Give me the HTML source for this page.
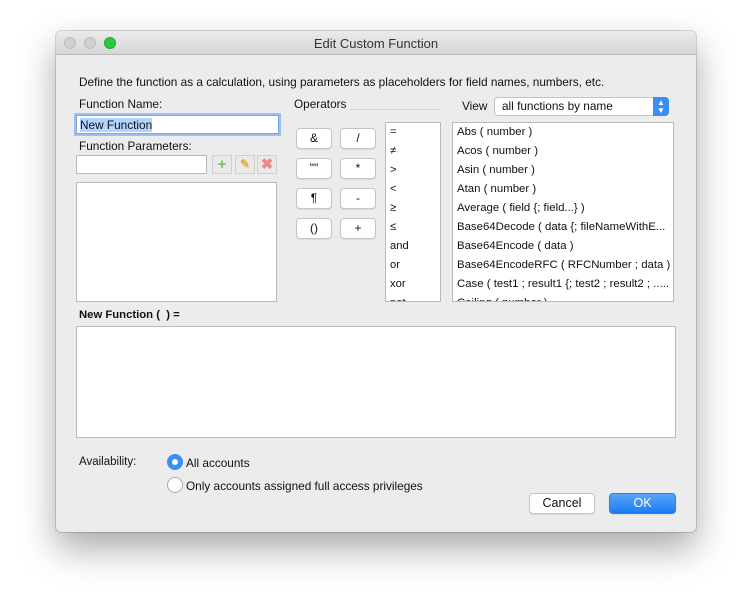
<!DOCTYPE html>
<html><head><style>
*{box-sizing:border-box;margin:0;padding:0}
body{width:752px;height:613px;background:#fff;font-family:"Liberation Sans",sans-serif;font-size:11.8px;color:#111;position:relative;overflow:hidden}
.win{position:absolute;left:56px;top:31px;width:640px;height:501px;background:#ececec;border-radius:5px;box-shadow:0 16px 36px rgba(0,0,0,.35),0 0 0 1px rgba(0,0,0,.15)}
.tb{position:absolute;left:0;top:0;width:640px;height:24px;background:linear-gradient(#ebebeb,#d6d6d6);border-bottom:1px solid #b8b8b8;border-radius:5px 5px 0 0;text-align:center;line-height:26px;font-size:13px;color:#333}
.dot{position:absolute;top:6px;width:12px;height:12px;border-radius:50%;background:#d0d0d0;border:1px solid #bcbcbc}
.a{position:absolute;white-space:nowrap}
.box{position:absolute;background:#fff;border:1px solid #b9b9b9}
.btn{position:absolute;background:#fff;border:1px solid #c4c4c4;border-radius:4px;text-align:center;font-size:12px;line-height:18px;box-shadow:0 1px 1px rgba(0,0,0,.08)}
.ib{position:absolute;width:20px;height:19px;border:1px solid #cfcfcf;background:#e9e9e9;text-align:center;line-height:17px;font-size:15px;font-weight:bold}
.li{position:absolute;left:4px;white-space:nowrap}
</style></head><body>
<div class="win">
<div class="tb">Edit Custom Function</div>
<div class="dot" style="left:8px"></div><div class="dot" style="left:28px"></div><div class="dot" style="left:48px;background:#2ac940;border-color:#1eaa32"></div>
</div>
<div class="a" style="left:79px;top:75px">Define the function as a calculation, using parameters as placeholders for field names, numbers, etc.</div>
<div class="a" style="left:79px;top:97px">Function Name:</div>
<div class="box" style="left:76px;top:115px;width:203px;height:19px;border:1px solid #7aa7e0;box-shadow:0 0 0 2px #9cc1ef"><span style="position:absolute;left:3px;top:2px;background:#b3d4fd">New Function</span></div>
<div class="a" style="left:79px;top:139px">Function Parameters:</div>
<div class="box" style="left:76px;top:155px;width:131px;height:19px"></div>
<div class="ib" style="left:212px;top:155px;color:#7cc25a">+</div>
<div class="ib" style="left:235px;top:155px;color:#e0b040;font-size:12px">✎</div>
<div class="ib" style="left:257px;top:155px;color:#e88">✖</div>
<div class="box" style="left:76px;top:182px;width:201px;height:120px"></div>
<div class="a" style="left:294px;top:97px">Operators</div>
<div style="position:absolute;left:350px;top:109px;width:90px;height:1px;background:#d4d4d4"></div>
<div class="btn" style="left:296px;top:128px;width:36px;height:21px">&amp;</div>
<div class="btn" style="left:340px;top:128px;width:36px;height:21px">/</div>
<div class="btn" style="left:296px;top:158px;width:36px;height:21px">""</div>
<div class="btn" style="left:340px;top:158px;width:36px;height:21px">*</div>
<div class="btn" style="left:296px;top:188px;width:36px;height:21px">¶</div>
<div class="btn" style="left:340px;top:188px;width:36px;height:21px">-</div>
<div class="btn" style="left:296px;top:218px;width:36px;height:21px">()</div>
<div class="btn" style="left:340px;top:218px;width:36px;height:21px">+</div>
<div class="box" style="left:385px;top:122px;width:56px;height:180px;overflow:hidden;font-size:11.2px">
<div class="li" style="top:3px">=</div><div class="li" style="top:22px">≠</div><div class="li" style="top:41px">&gt;</div><div class="li" style="top:60px">&lt;</div><div class="li" style="top:79px">≥</div><div class="li" style="top:98px">≤</div><div class="li" style="top:117px">and</div><div class="li" style="top:136px">or</div><div class="li" style="top:155px">xor</div><div class="li" style="top:174px">not</div></div>
<div class="a" style="left:462px;top:99px">View</div>
<div style="position:absolute;left:494px;top:97px;width:175px;height:19px;background:#fff;border:1px solid #c4c4c4;border-radius:4px;font-size:11.8px;line-height:17px;padding-left:7px">all functions by name<div style="position:absolute;right:-1px;top:-1px;width:16px;height:19px;background:#3b8ef5;border-radius:0 4px 4px 0;color:#fff;font-size:8px;line-height:8px;text-align:center;padding-top:2px">▲<br>▼</div></div>
<div class="box" style="left:452px;top:122px;width:222px;height:180px;overflow:hidden;font-size:11.4px">
<div class="li" style="top:3px">Abs ( number )</div><div class="li" style="top:22px">Acos ( number )</div><div class="li" style="top:41px">Asin ( number )</div><div class="li" style="top:60px">Atan ( number )</div><div class="li" style="top:79px">Average ( field {; field...} )</div><div class="li" style="top:98px">Base64Decode ( data {; fileNameWithE...</div><div class="li" style="top:117px">Base64Encode ( data )</div><div class="li" style="top:136px">Base64EncodeRFC ( RFCNumber ; data )</div><div class="li" style="top:155px">Case ( test1 ; result1 {; test2 ; result2 ; .....</div><div class="li" style="top:174px">Ceiling ( number )</div></div>
<div class="a" style="left:79px;top:309px;font-weight:bold;font-size:11.3px">New Function (&nbsp; ) =</div>
<div class="box" style="left:76px;top:326px;width:600px;height:112px"></div>
<div class="a" style="left:79px;top:456px;font-size:11.5px">Availability:</div>
<div style="position:absolute;left:167px;top:454px;width:16px;height:16px;border-radius:50%;background:#3b8ef5"><div style="position:absolute;left:5px;top:5px;width:6px;height:6px;border-radius:50%;background:#fff"></div></div>
<div class="a" style="left:186px;top:456px;font-size:11.8px">All accounts</div>
<div style="position:absolute;left:167px;top:477px;width:16px;height:16px;border-radius:50%;background:#fff;border:1px solid #aaa"></div>
<div class="a" style="left:186px;top:479px;font-size:11.8px">Only accounts assigned full access privileges</div>
<div class="btn" style="left:529px;top:493px;width:66px;height:21px;font-size:12.5px">Cancel</div>
<div class="btn" style="left:609px;top:493px;width:67px;height:21px;font-size:12.5px;background:linear-gradient(#5aa4f8,#1b7cf3);border-color:#2b7ff0;color:#fff">OK</div>
</body></html>
